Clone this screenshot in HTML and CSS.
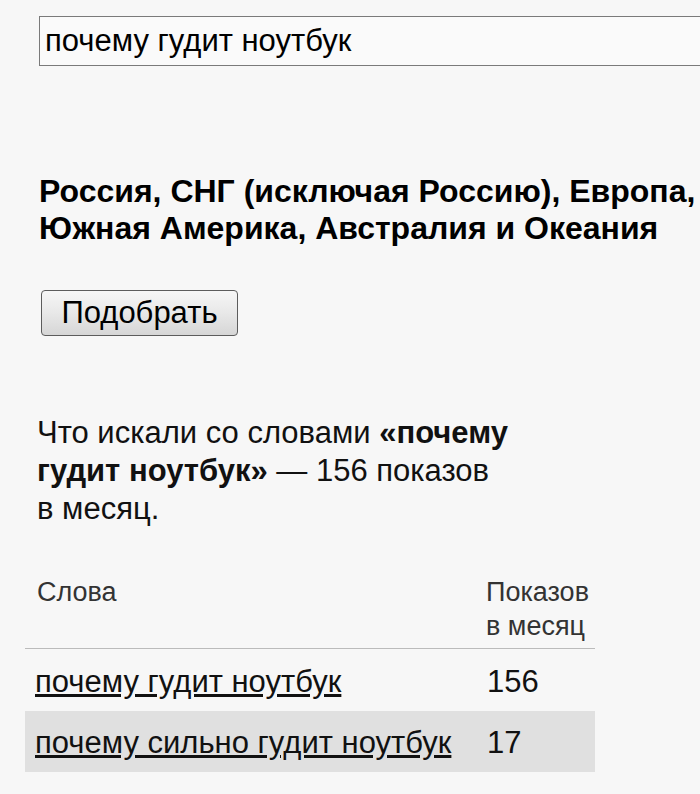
FILE: index.html
```html
<!DOCTYPE html>
<html lang="ru">
<head>
    <meta charset="UTF-8">
    <title>Подбор слов</title>
    <link rel="stylesheet" href="styles.css">
</head>
<body>
    <div class="page">
        <div class="search-field">почему гудит ноутбук</div>

        <h2 class="regions">Россия, СНГ (исключая Россию), Европа,<br>Южная Америка, Австралия и Океания</h2>

        <button class="pick-button">Подобрать</button>

        <p class="summary">Что искали со словами <b>«почему гудит ноутбук»</b> — 156&nbsp;показов<br>в&nbsp;месяц.</p>

        <table class="words">
            <thead>
                <tr>
                    <th class="col-words">Слова</th>
                    <th class="col-count">Показов<br>в месяц</th>
                </tr>
            </thead>
            <tbody>
                <tr>
                    <td><a href="#">почему гудит ноутбук</a></td>
                    <td class="count">156</td>
                </tr>
                <tr class="odd">
                    <td><a href="#">почему сильно гудит ноутбук</a></td>
                    <td class="count">17</td>
                </tr>
            </tbody>
        </table>
    </div>
</body>
</html>
```

FILE: styles.css
```css
* {
    margin: 0;
    padding: 0;
    box-sizing: border-box;
}

html, body {
    overflow: hidden;
}

body {
    background-color: #f7f7f7;
    font-family: "Liberation Sans", Arial, sans-serif;
    color: #000;
}

.page {
    padding: 16px 0 0 39px;
    overflow: hidden;
}

.search-field {
    height: 50px;
    width: 680px; /* runs past the right edge, as in the shot */
    border: 1px solid #7a7a7a;
    background-color: #fafafa;
    font-size: 31px;
    line-height: 47px;
    padding-left: 5px;
    white-space: nowrap;
}

.regions {
    margin-top: 107px;
    font-size: 32px;
    font-weight: bold;
    line-height: 37px;
    white-space: nowrap;
}

.pick-button {
    display: block;
    margin-top: 43px;
    margin-left: 2px;
    width: 197px;
    height: 46px;
    border: 1px solid #5c5c5c;
    border-radius: 4px;
    background: linear-gradient(#f6f6f6, #e8e8e8 50%, #d6d6d6);
    font-family: inherit;
    font-size: 31px;
    line-height: 44px;
    color: #000;
}

.summary {
    margin-top: 78px;
    margin-left: -2px;
    font-size: 31px;
    line-height: 38px;
    width: 490px;
    color: #111;
}

.words {
    margin-top: 47px;
    margin-left: -14px;
    border-collapse: collapse;
    width: 570px;
}

.words th {
    font-weight: normal;
    text-align: left;
    color: #333;
    font-size: 27px;
    line-height: 34px;
    vertical-align: top;
    padding: 0 0 5px 12px;
    border-bottom: 1px solid #bbb;
}

.words th.col-count {
    width: 119px;
    padding-left: 10px;
}

.words td {
    font-size: 31px;
    height: 62px;
    padding-left: 10px;
    padding-top: 4px;
    white-space: nowrap;
}

.words a {
    color: #111;
}

.words .count {
    padding-left: 11px;
    color: #111;
}

.words .odd td {
    background-color: #e0e0e0;
    height: 61px;
}
```
